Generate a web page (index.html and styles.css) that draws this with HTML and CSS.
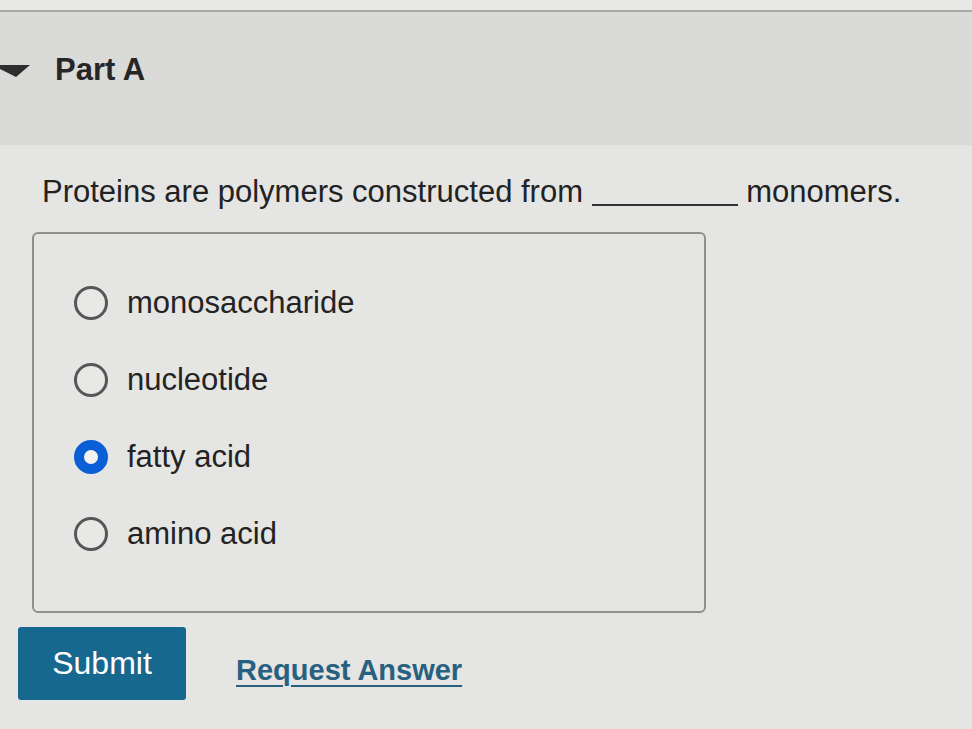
FILE: index.html
```html
<!DOCTYPE html>
<html lang="en">
<head>
    <meta charset="UTF-8">
    <title>Part A</title>
    <link rel="stylesheet" href="styles.css">
</head>
<body>
    <div id="topbar"></div>

    <div id="part-header">
        <svg class="toggle" width="38" height="14" viewBox="0 0 38 14">
            <polygon points="0,0 38,0 24,12" fill="#2e2e2e"/>
        </svg>
        <span class="part-title">Part A</span>
    </div>

    <div id="question">
        <p class="prompt">Proteins are polymers constructed from <span class="blank"></span> monomers.</p>

        <div class="choices">
            <label class="choice"><span class="radio"></span>monosaccharide</label>
            <label class="choice"><span class="radio"></span>nucleotide</label>
            <label class="choice"><span class="radio checked"></span>fatty acid</label>
            <label class="choice"><span class="radio"></span>amino acid</label>
        </div>

        <div class="actions">
            <button class="submit">Submit</button>
            <a class="request" href="#">Request Answer</a>
        </div>
    </div>
</body>
</html>
```

FILE: styles.css
```css
body {
    margin: 0;
    padding: 0;
    font-family: "Liberation Sans", Arial, sans-serif;
    background-color: #e5e5e3;
    color: #242424;
}

#topbar {
    height: 10px;
    background-color: #e8e8e6;
    border-bottom: 2px solid #a9a9a7;
}

#part-header {
    height: 133px;
    background-color: #dadad8;
    display: flex;
    align-items: flex-start;
    padding-top: 40px;
    box-sizing: border-box;
}

.toggle {
    margin-top: 13px;
    margin-left: -8px;
    flex-shrink: 0;
}

.part-title {
    margin-left: 25px;
    font-size: 31px;
    font-weight: bold;
    color: #262626;
}

#question {
    padding: 0 0 0 32px;
}

.prompt {
    margin: 27px 0 0 10px;
    font-size: 31px;
    line-height: 40px;
    color: #222;
}

.blank {
    display: inline-block;
    width: 146px;
    border-bottom: 2px solid #333;
    vertical-align: -4px;
}

.choices {
    margin-top: 20px;
    width: 674px;
    box-sizing: border-box;
    border: 2px solid #8f8f8d;
    border-radius: 6px;
    padding: 52px 0 60px 40px;
    display: flex;
    flex-direction: column;
    gap: 43px;
}

.choice {
    display: flex;
    align-items: center;
    gap: 19px;
    font-size: 31px;
    height: 34px;
    color: #232323;
}

.radio {
    width: 34px;
    height: 34px;
    box-sizing: border-box;
    border: 3px solid #565656;
    border-radius: 50%;
    background-color: #e8e8e6;
    flex-shrink: 0;
}

.radio.checked {
    border: 10px solid #0b5fd6;
    background-color: #f2f2f2;
}

.actions {
    display: flex;
    align-items: flex-start;
    gap: 50px;
    margin: 14px 0 0 -14px;
}

.submit {
    width: 168px;
    height: 73px;
    border: none;
    border-radius: 3px;
    background-color: #17688f;
    color: #fff;
    font-family: "Liberation Sans", Arial, sans-serif;
    font-size: 32px;
    padding: 0;
    text-align: center;
}

.request {
    font-size: 29px;
    font-weight: bold;
    color: #28607f;
    text-decoration: underline;
    text-decoration-thickness: 2px;
    text-underline-offset: 5px;
    margin-top: 27px;
}
```
